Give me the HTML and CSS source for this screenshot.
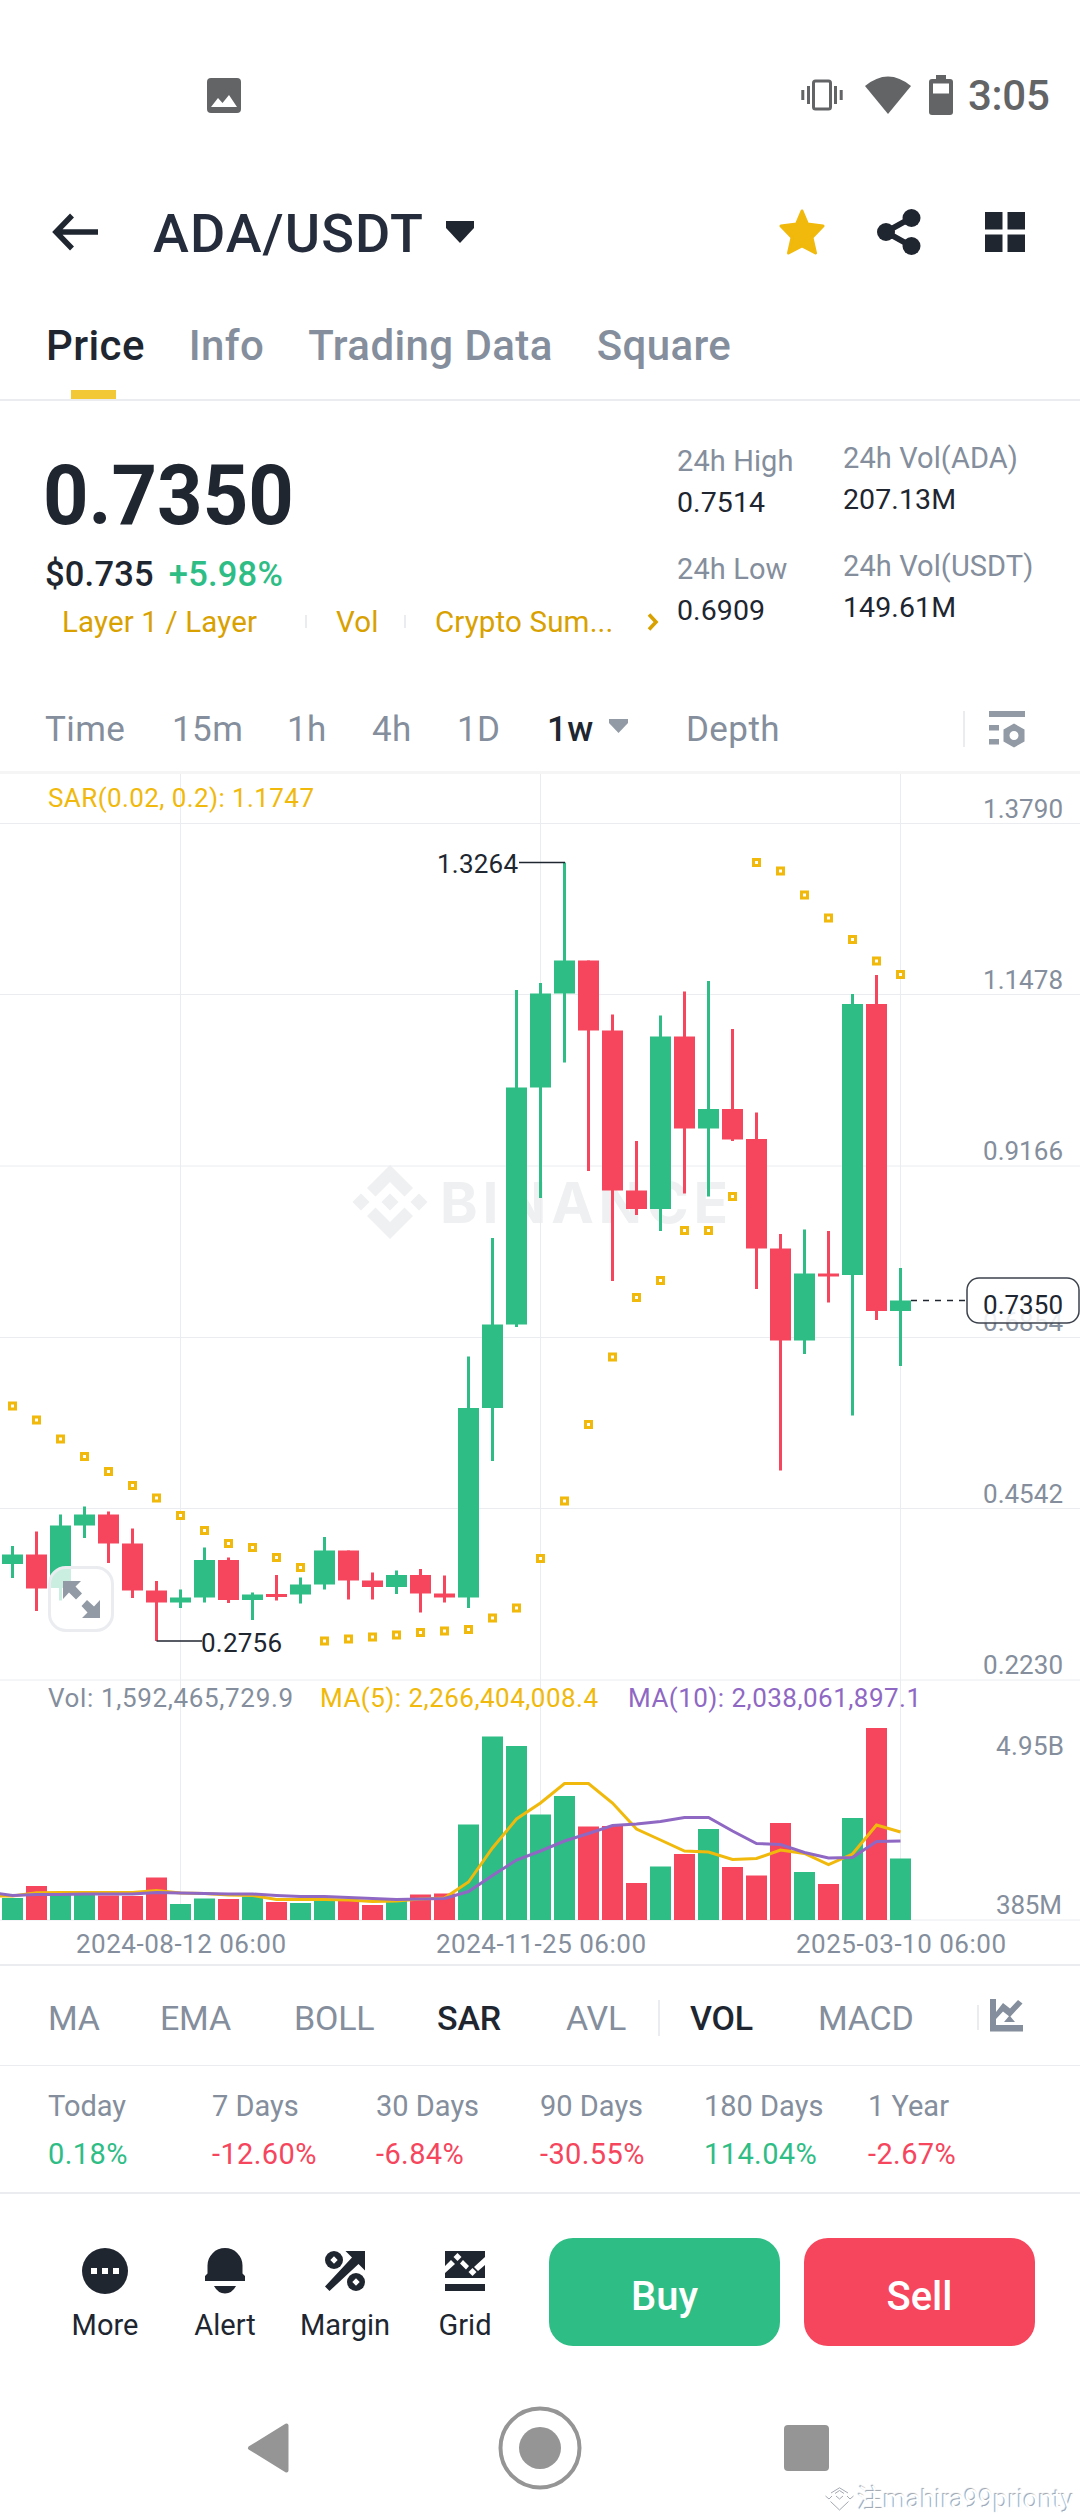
FILE: index.html
```html
<!DOCTYPE html>
<html lang="en">
<head>
    <meta charset="utf-8">
    <title>ADA/USDT</title>
    <link rel="stylesheet" href="styles.css">
</head>
<body>
    <div class="status-bar">
        <svg class="status-photo" width="34" height="35" viewBox="0 0 34 35">
            <rect width="34" height="35" rx="4" fill="#636466"/>
            <path d="M4 29 L11 20 L15.500 25 L22 17 L30 29 Z" fill="#fff"/>
        </svg>
        <div class="status-right">
            <svg width="42" height="32" viewBox="0 0 42 32" fill="none" stroke="#636466" stroke-width="3">
                <rect x="12.500" y="2" width="17" height="28" rx="2"/>
                <path d="M7.500 7 V25 M34.500 7 V25 M1.800 11 V21 M40.200 11 V21"/>
            </svg>
            <svg class="wifi" width="46" height="38" viewBox="0 0 46 38">
                <path d="M0 10 Q23 -9 46 10 L23 38 Z" fill="#636466"/>
            </svg>
            <svg class="battery" width="24" height="40" viewBox="0 0 24 40" fill="#636466">
                <rect x="7" y="0" width="10" height="6"/>
                <rect x="0" y="4" width="24" height="36" rx="3"/>
                <rect x="4" y="8.500" width="16" height="10" fill="#fff"/>
            </svg>
            <span class="clock">3:05</span>
        </div>
    </div>

    <div class="title-bar">
        <svg width="46" height="38" viewBox="0 0 46 38" fill="none" stroke="#202630" stroke-width="5.500">
            <path d="M46 19 H5 M20 2.500 L4 19 L20 35.500"/>
        </svg>
        <h1>ADA/USDT</h1>
        <svg class="title-caret" width="28" height="22" viewBox="0 0 28 22"><path d="M0 0 H28 V7 L14 22 L0 7 Z" fill="#202630"/></svg>
        <div class="title-actions">
            <svg width="46" height="46" viewBox="0 0 46 46"><path d="M23 2 L28.500 15 L44 17 L33 28.500 L36.500 44 L23 37 L9.500 44 L13 28.500 L2 17 L17.500 15 Z" fill="#f0b90b" stroke="#f0b90b" stroke-width="3" stroke-linejoin="round"/></svg>
            <svg width="44" height="46" viewBox="0 0 44 46" fill="#202630">
                <path d="M34 9 L9 23 L34 37" fill="none" stroke="#202630" stroke-width="6"/>
                <circle cx="34.500" cy="9" r="9"/><circle cx="9" cy="23" r="9"/><circle cx="34.500" cy="37" r="9"/>
            </svg>
            <svg width="40" height="40" viewBox="0 0 40 40" fill="#202630"><path d="M0 0H17.500V17.500H0ZM22.500 0H40V17.500H22.500ZM0 22.500H17.500V40H0ZM22.500 22.500H40V40H22.500Z"/></svg>
        </div>
    </div>

    <div class="tabs">
        <span class="tab active">Price</span>
        <span class="tab">Info</span>
        <span class="tab">Trading Data</span>
        <span class="tab">Square</span>
    </div>

    <div class="summary">
        <div class="summary-left">
            <div class="last-price">0.7350</div>
            <div class="change"><span>$0.735</span><span class="up">+5.98%</span></div>
            <div class="tags">
                <span>Layer 1 / Layer</span>
                <span>Vol</span>
                <span>Crypto Sum...</span>
                <svg width="12" height="18" viewBox="0 0 12 18"><path d="M2 1.500 L9 9 L2 16.500" fill="none" stroke="#d9a100" stroke-width="3.600"/></svg>
            </div>
        </div>
        <div class="stats">
            <div class="stat-label">24h High</div>
            <div class="stat-value">0.7514</div>
            <div class="stat-label">24h Low</div>
            <div class="stat-value">0.6909</div>
        </div>
        <div class="stats stats-vol">
            <div class="stat-label">24h Vol(ADA)</div>
            <div class="stat-value">207.13M</div>
            <div class="stat-label">24h Vol(USDT)</div>
            <div class="stat-value">149.61M</div>
        </div>
    </div>

    <div class="intervals">
        <span>Time</span>
        <span>15m</span>
        <span>1h</span>
        <span>4h</span>
        <span>1D</span>
        <span class="active">1w</span>
        <svg class="interval-caret" width="19" height="14" viewBox="0 0 19 14"><path d="M0 0 H19 V4 L9.500 14 L0 4 Z" fill="#929aa5"/></svg>
        <span>Depth</span>
        <span class="v-line"></span>
        <svg width="37" height="37" viewBox="0 0 37 37" fill="#929aa5">
            <path d="M0 0H36V6H0ZM0 14H10V19.500H0ZM0 28H10V33.500H0Z"/>
            <path fill-rule="evenodd" d="M25 12.500 L35.500 18.500 V30.500 L25 36.500 L14.500 30.500 V18.500 Z M25 20 A4.500 4.500 0 1 0 25 29 A4.500 4.500 0 1 0 25 20 Z"/>
        </svg>
    </div>

    <div class="chart">
        <svg width="1080" height="1190" viewBox="0 774 1080 1190">
            <g fill="#eff0f2">
                <path d="M390 1165 L413 1188 L404.500 1196.500 L390 1182 L375.500 1196.500 L367 1188 Z"/>
                <path d="M390 1239 L413 1216 L404.500 1207.500 L390 1222 L375.500 1207.500 L367 1216 Z"/>
                <path d="M361 1193.500 L369.500 1202 L361 1210.500 L352.500 1202 Z M390 1193.500 L398.500 1202 L390 1210.500 L381.500 1202 Z M419 1193.500 L427.500 1202 L419 1210.500 L410.500 1202 Z"/>
                <text class="brand" x="440" y="1223" textLength="288">BINANCE</text>
            </g>
            <g id="grid" stroke="#eaecef"></g>
            <g id="candles"></g>
            <g id="sar" fill="#fff" stroke="#f0b90b" stroke-width="3"></g>
            <g id="volume"></g>
            <polyline id="ma5" fill="none" stroke="#f0b90b" stroke-width="3"/>
            <polyline id="ma10" fill="none" stroke="#8f68c4" stroke-width="3"/>

            <g class="axis">
                <text x="983" y="818" textLength="80">1.3790</text>
                <text x="983" y="989" textLength="80">1.1478</text>
                <text x="983" y="1160" textLength="80">0.9166</text>
                <text x="983" y="1331" textLength="80">0.6854</text>
                <text x="983" y="1503" textLength="80">0.4542</text>
                <text x="983" y="1674" textLength="80">0.2230</text>
                <text x="996" y="1755" textLength="68">4.95B</text>
                <text x="996" y="1914" textLength="66">385M</text>
                <text x="76" y="1953" textLength="210">2024-08-12 06:00</text>
                <text x="436" y="1953" textLength="210">2024-11-25 06:00</text>
                <text x="796" y="1953" textLength="210">2025-03-10 06:00</text>
                <text x="48" y="1707" textLength="245">Vol: 1,592,465,729.9</text>
            </g>
            <text x="48" y="807" textLength="266" fill="#f0b90b">SAR(0.02, 0.2): 1.1747</text>
            <text x="320" y="1707" textLength="278" fill="#f0b90b">MA(5): 2,266,404,008.4</text>
            <text x="628" y="1707" textLength="293" fill="#8f68c4">MA(10): 2,038,061,897.1</text>

            <g fill="#202630" stroke="none">
                <text x="437" y="873" textLength="81">1.3264</text>
                <text x="201" y="1652" textLength="81">0.2756</text>
            </g>
            <path d="M519 862.500 H565 M156.500 1641 H202" stroke="#202630" stroke-width="1.500"/>
            <path d="M911 1300.500 H967" stroke="#202630" stroke-width="1.500" stroke-dasharray="6 6"/>
            <rect x="967" y="1278" width="112" height="45" rx="12" fill="#fff" fill-opacity=".86" stroke="#3c424c" stroke-width="1.500"/>
            <text x="983" y="1314" textLength="80" fill="#202630">0.7350</text>
        </svg>
        <div class="expand">
            <svg width="37" height="37" viewBox="0 0 37 37" fill="#929aa5">
                <path d="M0 0 H18 L12.500 5.500 L19 12.500 L13 18.500 L6 11.500 L0 18 Z"/>
                <path d="M37 37 H19 L24.500 31.500 L18.500 25 L24 19 L31 25.500 L37 19 Z"/>
            </svg>
        </div>
    </div>

    <div class="indicators">
        <span>MA</span>
        <span>EMA</span>
        <span>BOLL</span>
        <span class="active">SAR</span>
        <span>AVL</span>
        <span class="v-line"></span>
        <span class="active">VOL</span>
        <span>MACD</span>
        <span class="v-line short"></span>
        <svg width="33" height="33" viewBox="0 0 33 33" fill="#848e9c">
            <path d="M0 0 H6 V13 L13 4 L20 9.500 L28 1 L32.500 4.500 L20 18 L13 12.500 L6 20 V26 H33 V32.500 H0 Z"/>
            <path d="M14 23 L19.500 16.500 L25 23 Z"/>
        </svg>
    </div>

    <div class="returns">
        <div><span>Today</span><b class="up">0.18%</b></div>
        <div><span>7 Days</span><b class="down">-12.60%</b></div>
        <div><span>30 Days</span><b class="down">-6.84%</b></div>
        <div><span>90 Days</span><b class="down">-30.55%</b></div>
        <div><span>180 Days</span><b class="up">114.04%</b></div>
        <div><span>1 Year</span><b class="down">-2.67%</b></div>
    </div>

    <div class="actions">
        <div class="action">
            <svg width="46" height="46" viewBox="0 0 46 46"><circle cx="23" cy="23" r="23" fill="#202630"/><path d="M9 20H15V26H9ZM20 20H26V26H20ZM31 20H37V26H31Z" fill="#fff"/></svg>
            <span>More</span>
        </div>
        <div class="action">
            <svg width="46" height="46" viewBox="0 0 46 46" fill="#202630"><path d="M5.500 17.500 A17.500 17.500 0 0 1 40.500 17.500 V25.500 L43 28 V33 H3 V28 L5.500 25.500 Z M12 38 H34 Q30 45.500 23 45.500 Q16 45.500 12 38 Z"/></svg>
            <span>Alert</span>
        </div>
        <div class="action">
            <svg width="46" height="46" viewBox="0 0 46 46" fill="#202630">
                <path d="M23.500 3 H43 V22.500 L36.500 16 L7.500 43 L3 38.500 L30 9.500 Z"/>
                <circle cx="12" cy="12" r="9"/><circle cx="34" cy="34" r="9"/>
                <path d="M12 8.300L15.700 12L12 15.700L8.300 12ZM34 30.300L37.700 34L34 37.700L30.300 34Z" fill="#fff"/>
            </svg>
            <span>Margin</span>
        </div>
        <div class="action">
            <svg width="46" height="46" viewBox="0 0 46 46">
                <path d="M3 3H43V30H3ZM3 36H43V43H3Z" fill="#202630"/>
                <path d="M3 25V18L9 12L13 16ZM43 9V17L36 23L32 19ZM15.500 5L19.500 9L15.500 13L11.500 9ZM21 12L27 18L24 21.500L18 15.500ZM30.500 20L34.500 24L30.500 28L26.500 24Z" fill="#fff"/>
            </svg>
            <span>Grid</span>
        </div>
        <button class="buy">Buy</button>
        <button class="sell">Sell</button>
    </div>

    <div class="nav-bar">
        <svg width="42" height="50" viewBox="0 0 42 50"><path d="M39.500 2.500 V47.500 L3 25 Z" fill="#959595" stroke="#959595" stroke-width="4" stroke-linejoin="round"/></svg>
        <svg class="home" width="84" height="84" viewBox="0 0 84 84"><circle cx="42" cy="42" r="39.500" fill="none" stroke="#959595" stroke-width="4"/><circle cx="42" cy="42" r="21" fill="#959595"/></svg>
        <svg width="45" height="46" viewBox="0 0 45 46"><rect width="45" height="46" rx="4" fill="#959595"/></svg>
    </div>

    <div class="author-mark">
        <svg width="29" height="24" viewBox="0 0 29 24" fill="none" stroke="#a4a9b2" stroke-width="1"><path d="M6 6L14.500 .8L23 6M10 6.500L14.500 3.500L19 6.500M.5 9L4 12L7 9M11 9L14.500 12L18 9M22 9L25 12L28.500 9M5.500 14.500L14.500 23L23.500 14.500"/></svg>
        <span>注mahira99prionty</span>
    </div>
    <script src="chart.js"></script>
</body>
</html>
```
FILE: styles.css
```css
* {
    box-sizing: border-box;
}

body {
    position: relative;
    width: 1080px;
    height: 2520px;
    margin: 0;
    overflow: hidden;
    background: #fff;
    color: #202630;
    font-family: Roboto, "Noto Sans CJK SC", sans-serif;
    white-space: nowrap;
}

svg {
    display: block;
    flex: none;
}

.up {
    color: #2ebd85;
}

.down {
    color: #f6465d;
}

/* status bar */
.status-bar {
    display: flex;
    justify-content: space-between;
    align-items: center;
    height: 190px;
    padding: 0 29px 0 207px;
}

.status-right {
    display: flex;
    align-items: center;
}

.wifi {
    margin-left: 22px;
}

.battery {
    margin: 0 15px 0 18px;
}

.clock {
    width: 83px;
    color: #636466;
    font-size: 42px;
    font-weight: 500;
    letter-spacing: -.3px;
}

/* pair title */
.title-bar {
    display: flex;
    align-items: center;
    height: 83px;
    padding: 0 55px 0 52px;
}

h1 {
    width: 293px;
    margin: 4px 0 0 55px;
    color: #252c3b;
    font-size: 54px;
    font-weight: 500;
    letter-spacing: 1.1px;
}

.title-actions {
    display: flex;
    align-items: center;
    margin-left: auto;
}

.title-actions svg + svg {
    margin-left: 52px;
}

.title-actions svg:last-child {
    margin-left: 64px;
}

/* tabs */
.tabs {
    display: flex;
    gap: 44px;
    height: 128px;
    padding-left: 46px;
    border-bottom: 2px solid #eaecef;
    color: #848e9c;
    font-size: 42px;
    font-weight: 500;
    letter-spacing: .4px;
    line-height: 146px;
}

.tab {
    position: relative;
}

.tab.active {
    color: #202630;
}

.tab.active::after {
    content: "";
    position: absolute;
    left: 25px;
    bottom: 0;
    width: 45px;
    height: 9px;
    background: #f3c837;
}

/* price summary */
.summary {
    display: flex;
    height: 286px;
}

.summary-left {
    width: 677px;
    padding: 43px 0 0 45px;
}

.last-price {
    height: 100px;
    margin-left: -2px;
    padding-top: 1px;
    font-size: 84px;
    font-weight: 700;
    line-height: 102px;
    transform: scaleX(.945);
    transform-origin: left;
}

.change {
    display: flex;
    gap: 15px;
    height: 61px;
    font-size: 34.500px;
    font-weight: 500;
    letter-spacing: .2px;
    line-height: 61px;
}

.tags {
    display: flex;
    align-items: center;
    height: 33px;
    padding-left: 17px;
    color: #d9a100;
    font-size: 29.500px;
    letter-spacing: .15px;
}

.tags span {
    position: relative;
    width: 99px;
}

.tags span:first-child {
    width: 274px;
}

.tags span:nth-child(3) {
    width: 212px;
}

.tags span + span::before {
    content: "";
    position: absolute;
    left: -31px;
    top: 10px;
    width: 2px;
    height: 13px;
    background: #eaecef;
}

.stats {
    width: 166px;
    padding-top: 39px;
    font-size: 29px;
    letter-spacing: .1px;
    line-height: 42px;
}

.stats-vol {
    width: 236px;
    padding-top: 36px;
}

.stat-label {
    color: #848e9c;
}

.stat-value {
    margin-bottom: 24px;
    font-size: 28.500px;
}

/* interval picker */
.intervals {
    display: grid;
    grid-template-columns: 127px 115px 85px 85px 90px 59px 80px 277px 26px 40px;
    align-items: center;
    height: 87px;
    padding-left: 45px;
    border-bottom: 3px solid #f5f5f6;
    color: #848e9c;
    font-size: 35px;
    letter-spacing: .4px;
}

.intervals .active,
.indicators .active {
    color: #202630;
    font-weight: 500;
}

.interval-caret {
    margin-top: -6px;
    margin-left: 3px;
}

.v-line {
    width: 2px;
    height: 36px;
    background: #eaecef;
}

.v-line.short {
    height: 25px;
}

/* chart */
.chart {
    position: relative;
    height: 1190px;
}

.chart text {
    font-size: 26px;
}

.axis {
    fill: #848e9c;
}

.chart .brand {
    font-family: Inter, sans-serif;
    font-size: 57px;
    font-weight: 700;
}

.expand {
    position: absolute;
    left: 48px;
    top: 792px;
    display: flex;
    align-items: center;
    justify-content: center;
    width: 66px;
    height: 66px;
    border: 3px solid #eaecf0;
    border-radius: 18px;
    background: rgba(255, 255, 255, .75);
}

/* indicators */
.indicators {
    display: grid;
    grid-template-columns: 112px 134px 143px 129px 92px 32px 128px 159px 12px 33px;
    align-items: center;
    height: 102px;
    padding: 4px 0 0 48px;
    border-top: 2px solid #eaecef;
    border-bottom: 1px solid #eaecef;
    color: #848e9c;
    font-size: 34px;
    letter-spacing: -.2px;
}

.indicators svg {
    margin: -4px 0 0 1px;
}

/* period returns */
.returns {
    display: grid;
    grid-template-columns: repeat(6, 164px);
    height: 128px;
    padding: 16px 0 0 48px;
    border-bottom: 2px solid #eaecef;
    font-size: 29px;
    line-height: 48px;
}

.returns span {
    display: block;
    color: #848e9c;
}

.returns b {
    font-weight: 400;
    letter-spacing: .4px;
}

/* bottom actions */
.actions {
    display: flex;
    height: 174px;
    padding: 44px 45px 0;
}

.action {
    display: flex;
    flex-direction: column;
    align-items: center;
    width: 120px;
    padding-top: 10px;
    font-size: 29px;
    line-height: 62px;
}

button {
    width: 231px;
    height: 108px;
    margin-left: 24px;
    padding: 8px 0 0;
    border: none;
    border-radius: 24px;
    color: #fff;
    font-family: inherit;
    font-size: 40px;
    font-weight: 500;
}

.buy {
    background: #2ebd85;
}

.buy + .sell {
    background: #f6465d;
}

/* system navigation */
.nav-bar {
    display: flex;
    align-items: center;
    height: 160px;
    padding-left: 247px;
}

.home {
    margin: 0 202px 0 209px;
}

.author-mark {
    position: absolute;
    right: 6px;
    bottom: 3px;
    display: flex;
    align-items: center;
    gap: 3px;
    color: #fff;
    font-size: 26px;
    letter-spacing: .1px;
    line-height: 36px;
    text-shadow: -1px -1px 1px #9aa0aa;
}
```
FILE: chart.js
```js
const UP = '#2ebd85';
const DOWN = '#f6465d';
const STEP = 24;
const FIRST = 12.5;

// side, high, body top, body bottom, low, volume top
const candles = [
    ['g', 1546, 1554.5, 1564, 1578, 1898],
    ['r', 1531.5, 1554.5, 1588.5, 1611, 1886],
    ['g', 1514.5, 1525.5, 1588, 1600.5, 1895],
    ['g', 1506.5, 1514.5, 1525.5, 1538, 1895],
    ['r', 1511.5, 1514.5, 1543.5, 1563, 1895.5],
    ['r', 1528.5, 1543.5, 1590.5, 1598, 1896],
    ['r', 1581, 1590.5, 1602.5, 1641, 1877.5],
    ['g', 1589.5, 1597.5, 1602.5, 1608, 1904],
    ['g', 1547.5, 1560, 1597.5, 1602.5, 1898.5],
    ['r', 1557.5, 1560, 1600, 1603, 1899],
    ['g', 1592.5, 1594.5, 1600, 1620, 1896.5],
    ['r', 1575, 1594, 1597, 1600.5, 1902],
    ['g', 1577.5, 1584.5, 1594.5, 1603.5, 1903],
    ['g', 1537, 1550.5, 1584.5, 1589.5, 1901],
    ['r', 1550.5, 1550.5, 1580.5, 1599.5, 1901],
    ['r', 1572.5, 1580.5, 1587, 1599.5, 1905],
    ['g', 1570.5, 1575, 1587, 1594, 1898],
    ['r', 1569, 1575, 1593.5, 1612.5, 1894.5],
    ['r', 1575.5, 1593.5, 1597.5, 1602.5, 1893.5],
    ['g', 1356.5, 1408, 1597.5, 1608, 1824.5],
    ['g', 1238, 1324.5, 1408, 1461, 1736.5],
    ['g', 990, 1087.5, 1324.5, 1327, 1746],
    ['g', 983, 993.5, 1087.5, 1198, 1814.5],
    ['g', 862.5, 960.5, 993.5, 1062.5, 1796],
    ['r', 960.5, 960.5, 1030.5, 1171, 1826.5],
    ['r', 1014.5, 1030.5, 1190.5, 1281, 1826],
    ['r', 1141, 1190.5, 1209, 1215, 1883],
    ['g', 1015.5, 1036.5, 1209, 1231, 1866.5],
    ['r', 991.5, 1036.5, 1128.5, 1193.5, 1854],
    ['g', 981, 1109, 1128.5, 1196.5, 1829],
    ['r', 1029, 1109, 1139.5, 1141, 1867],
    ['r', 1112.5, 1139, 1248.5, 1289, 1875.5],
    ['r', 1234, 1248.5, 1340.5, 1470.5, 1823],
    ['g', 1229.5, 1273.5, 1340.5, 1354, 1872],
    ['r', 1231, 1273.5, 1276.5, 1302.5, 1884],
    ['g', 994, 1004, 1275, 1415.5, 1818],
    ['r', 975, 1004, 1311, 1320, 1728],
    ['g', 1268, 1300.5, 1311, 1366, 1858.5]
];

const sar = [1406, 1420, 1439, 1456.5, 1471.5, 1485.5, 1498, 1515.5, 1530.5, 1543.5, 1547.5, 1557.5, 1567.5,
    1641, 1639, 1637, 1635, 1632.5, 1631, 1629.5, 1618, 1608, 1558.5, 1501, 1424.5, 1357, 1297.5, 1280.5,
    1230.5, 1230.5, 1196.5, 862.5, 871, 895, 918, 939.5, 961, 974.5];

// both averages start one step left of the first candle
const ma5 = [1896, 1896, 1892.7, 1892.5, 1892.5, 1892.5, 1892.5, 1890.5, 1893, 1893.5, 1895, 1895.5, 1899.5,
    1899.5, 1899.5, 1900, 1901.5, 1901, 1899, 1898, 1882, 1848, 1819, 1803, 1783.5, 1783.5, 1803, 1829, 1840,
    1851, 1852, 1859.5, 1858.5, 1850, 1853.5, 1864.5, 1854, 1825, 1832];
const ma10 = [1892, 1895.5, 1894.5, 1894.5, 1894, 1894, 1894, 1892.5, 1893, 1893.5, 1894, 1894, 1895.5,
    1896.5, 1896.5, 1897.5, 1898.5, 1899.5, 1899, 1898.5, 1891.5, 1875.5, 1860, 1851, 1841, 1833.5, 1825.5,
    1824, 1821.5, 1817.5, 1817.5, 1831, 1843.5, 1844.5, 1852.5, 1858, 1857.5, 1841.5, 1841];

function add(parent, name, attrs) {
    const el = document.createElementNS('http://www.w3.org/2000/svg', name);
    for (const key in attrs) {
        el.setAttribute(key, attrs[key]);
    }
    document.getElementById(parent).appendChild(el);
}

for (const y of [823.5, 994.5, 1166, 1337.5, 1508.5, 1680, 1920]) {
    add('grid', 'path', { d: `M0 ${y} H1080` });
}
for (const x of [180.5, 540.5, 900.5]) {
    add('grid', 'path', { d: `M${x} 774 V1920` });
}

candles.forEach(([side, high, top, bottom, low, vol], i) => {
    const x = FIRST + i * STEP;
    const fill = side === 'g' ? UP : DOWN;
    add('candles', 'rect', { x: x - 1.5, y: high, width: 3, height: low - high, fill });
    add('candles', 'rect', { x: x - 10.5, y: top, width: 21, height: bottom - top, fill });
    add('volume', 'rect', { x: x - 10.5, y: vol, width: 21, height: 1920 - vol, fill });
    add('sar', 'rect', { x: x - 3, y: sar[i] - 3, width: 6, height: 6 });
});

const toPoints = values => values.map((y, i) => `${FIRST + (i - 1) * STEP},${y}`).join(' ');
document.getElementById('ma5').setAttribute('points', toPoints(ma5));
document.getElementById('ma10').setAttribute('points', toPoints(ma10));
```
